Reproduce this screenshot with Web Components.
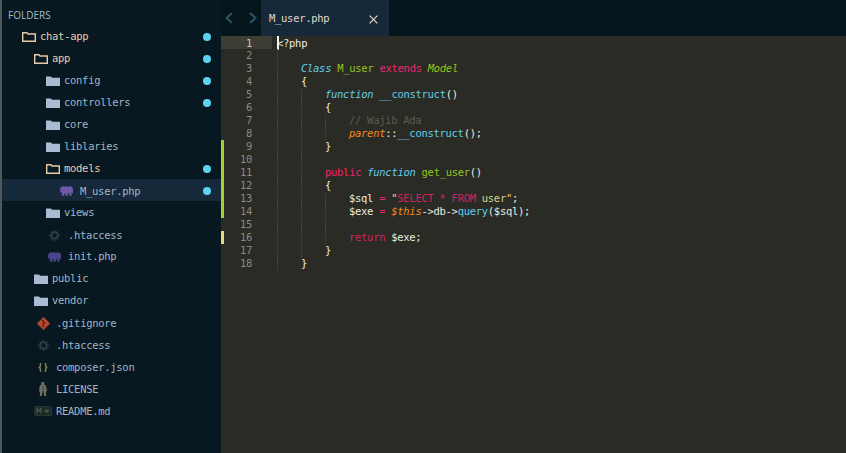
<!DOCTYPE html>
<html><head><meta charset="utf-8"><style>
html,body{margin:0;padding:0;background:#2b2b25;overflow:hidden}
body{width:846px;height:453px}
</style></head><body>
<app-window>
  <side-bar slot="side"></side-bar>
  <tab-bar slot="tabs"></tab-bar>
  <code-view slot="code"></code-view>
</app-window>
<script>
const FONT='"DejaVu Sans Mono","Liberation Mono",monospace';
const TXT=`font:10.5px ${FONT};letter-spacing:-.29px`;
const ICONS={
open:`<svg width="14" height="10" viewBox="0 0 14 10"><path d="M.7 9.300V.7h4.300l1 1.300h7.300v7.300z" fill="none" stroke="#e8c9a8" stroke-width="1.400"/></svg>`,
closed:`<svg width="14" height="10" viewBox="0 0 14 10"><path d="M0 10V.4h5l1.100 1.400H14V10z" fill="#a9bcd3"/></svg>`,
php:`<svg width="13" height="10" viewBox="0 0 13 10"><path d="M3.200.2C1.300.2.300 1.500.1 3.300L0 6.200c0 .6.800.7 1 .1l.5-1.300.4 4.700h2.300l.2-2.400h.9l.2 2.400h2.200l.3-2.400h1.100l.3 2.400h2.200L11.600 6l.5 1c.3.500.9.300.9-.3V3.400C13 1.500 11.900.2 10 .2 9 .2 8.400.7 8 1.300 7.500.6 6.900.2 6 .2 5.300.2 4.800.5 4.500.8 4.200.4 3.800.2 3.200.2z" fill="COL"/></svg>`,
gear:`<svg width="11" height="11" viewBox="0 0 11 11"><circle cx="5.500" cy="5.500" r="3.200" fill="none" stroke="#2a3d48" stroke-width="2.100"/><path d="M5.500 0v2M5.500 9v2M0 5.500h2M9 5.500h2M1.600 1.600 3 3M8 8l1.400 1.400M9.400 1.600 8 3M3 8 1.600 9.400" stroke="#2a3d48" stroke-width="1.400"/></svg>`,
git:`<svg width="13" height="13" viewBox="0 0 13 13"><path d="M6.500 0 13 6.500 6.500 13 0 6.500z" fill="#b8482e"/><path d="M5 3l3.300 3.300M6.300 5v4" stroke="#4a1f16" stroke-width="1.100"/><circle cx="6.300" cy="9.300" r=".9" fill="#4a1f16"/></svg>`,
json:`<svg width="10" height="9" viewBox="0 0 10 9"><path d="M3.300.6C1.900.6 2.300 1.800 2.300 3 2.300 4 1.700 4.500.7 4.500c1 0 1.600.5 1.600 1.500 0 1.200-.4 2.400 1 2.400M6.700.6c1.400 0 1 1.200 1 2.400 0 1 .6 1.500 1.600 1.500-1 0-1.600.5-1.600 1.500 0 1.200.4 2.400-1 2.400" fill="none" stroke="#8f8c58" stroke-width="1.300"/></svg>`,
lic:`<svg width="8" height="14" viewBox="0 0 8 14"><path d="M2.500 0h2.600l.4 2.800 1.500.8L8 9l-.9.700V14H5.100l-.7-5h-.8l-.7 5H.9V9.700L0 9l.9-5.400 1.300-.8z" fill="#6d6f60"/><path d="M4 4v4" stroke="#2a302c" stroke-width=".8"/></svg>`,
md:`<svg width="18" height="10" viewBox="0 0 18 10"><rect x=".5" y=".5" width="17" height="9" rx="1" fill="#1b2a2b" stroke="#2a3634"/><path d="M3 7.500v-5l2 2.400 2-2.400v5M10.500 5h4.500M12.700 3v4" fill="none" stroke="#505545" stroke-width="1.300"/></svg>`
};
function def(name,css,html,init){customElements.define(name,class extends HTMLElement{constructor(){super();const r=this.attachShadow({mode:'open'});r.innerHTML=`<style>${css}</style>${html}`;}connectedCallback(){init&&init.call(this,this.shadowRoot)}})}

def('app-window',`:host{display:grid;grid-template-columns:221px 1fr;grid-template-rows:36px 1fr;width:846px;height:453px;background:#2b2b25}
.s{grid-row:1/3;display:block}`,`<div class="s"><slot name="side"></slot></div><slot name="tabs"></slot><slot name="code"></slot>`);

def('tree-row',`:host{display:flex;align-items:center;height:22px;${TXT};color:#9fb6c6}
:host([selected]){background:#16293a}
:host([open]){color:#e8cdb0}
.i{display:flex;justify-content:center;align-items:center;flex:none;margin-top:2px}
.t{white-space:pre}
:host([low]) .t{padding-top:2px}
.d{margin-left:auto;margin-right:10px;margin-top:2px;width:8px;height:8px;border-radius:50%;background:#5cd3ee;flex:none}`,
`<span class="i"></span><span class="t"><slot></slot></span><span class="d"></span>`,
function(r){
  const pad=+this.getAttribute('pad'),w=+(this.getAttribute('iw')||14),gap=+(this.getAttribute('gap')||4);
  const i=r.querySelector('.i');i.style.marginLeft=pad+'px';i.style.width=w+'px';i.style.marginRight=gap+'px';
  i.innerHTML=(ICONS[this.getAttribute('icon')]||'').replace('COL',this.hasAttribute('selected')?'#6e58a8':'#4c4488');
  if(!this.hasAttribute('dot'))r.querySelector('.d').style.display='none';
});

def('side-bar',`:host{display:block;height:453px;background:#071820;border-left:2px solid #51585c;box-sizing:border-box;overflow:hidden}
.h{height:25px;box-sizing:border-box;padding:9px 0 0 6px;font:10px/12px "Open Sans",sans-serif;color:#a6bac6}`,
`<div class="h">FOLDERS</div>
<tree-row pad="20" icon="open" dot open>chat-app</tree-row>
<tree-row pad="32" icon="open" dot open>app</tree-row>
<tree-row pad="44" icon="closed" dot>config</tree-row>
<tree-row pad="44" icon="closed" dot>controllers</tree-row>
<tree-row pad="44" icon="closed">core</tree-row>
<tree-row pad="44" icon="closed">liblaries</tree-row>
<tree-row pad="44" icon="open" dot open>models</tree-row>
<tree-row pad="58" icon="php" iw="13" gap="7" selected dot low>M_user.php</tree-row>
<tree-row pad="44" icon="closed">views</tree-row>
<tree-row pad="46" icon="gear" iw="12" gap="8" low>.htaccess</tree-row>
<tree-row pad="46" icon="php" iw="13" gap="7">init.php</tree-row>
<tree-row pad="32" icon="closed">public</tree-row>
<tree-row pad="32" icon="closed">vendor</tree-row>
<tree-row pad="34" icon="git" iw="14" gap="6" low>.gitignore</tree-row>
<tree-row pad="34" icon="gear" iw="14" gap="6" low>.htaccess</tree-row>
<tree-row pad="34" icon="json" iw="14" gap="6" low>composer.json</tree-row>
<tree-row pad="34" icon="lic" iw="14" gap="6" low>LICENSE</tree-row>
<tree-row pad="32" icon="md" iw="18" gap="4" low>README.md</tree-row>`);

def('tab-bar',`:host{display:flex;height:36px;background:#05151c;${TXT}}
.nav{width:40px;display:flex;align-items:center;padding-left:4px;gap:16px;box-sizing:border-box}
.tab{width:128px;background:#16293a;color:#e0d8c8;display:flex;align-items:center;padding-left:8px;box-sizing:border-box}
.x{margin-left:auto;margin-right:11px;margin-top:3px;display:flex}`,
`<div class="nav"><svg width="8" height="12" viewBox="0 0 8 12"><path d="M7 1 1.500 6 7 11" fill="none" stroke="#2d5266" stroke-width="2.200"/></svg><svg width="8" height="12" viewBox="0 0 8 12"><path d="M1 1l5.500 5L1 11" fill="none" stroke="#2d5266" stroke-width="2.200"/></svg></div>
<div class="tab"><span>M_user.php</span><span class="x"><svg width="9" height="9" viewBox="0 0 9 9"><path d="M.6.6l7.800 7.800M8.400.6.600 8.400" stroke="#e4d8c4" stroke-width="1.200"/></svg></span></div>`);

const K=(c,t,i)=>`<span style="color:${c}${i?';font-style:italic':''}">${t}</span>`;
const W='#ececE0',B='#62cdea',G='#94c41f',P='#ec2670',O='#f08c1c',R='#d0245f';
const LINES=[
[0,'&lt;?php'],[1,''],
[1,`${K(B,'Class',1)} ${K(G,'M_user')} ${K(P,'extends')} ${K(G,'Model',1)}`],
[1,'{'],
[2,`${K(B,'function',1)} ${K(B,'__construct')}()`],
[2,'{'],
[3,K('#5d5c52','// Wajib Ada')],
[3,`${K(O,'parent',1)}::${K(B,'__construct')}();`],
[2,'}'],[2,''],
[2,`${K(P,'public')} ${K(B,'function',1)} ${K(G,'get_user')}()`],
[2,'{'],
[3,`$sql ${K(P,'=')} ${K('#e6dc8c','"')}${K(R,'SELECT * FROM')} ${K('#d8d088','user"')};`],
[3,`$exe ${K(P,'=')} ${K(O,'$this',1)}-&gt;db-&gt;${K(B,'query')}($sql);`],
[3,''],
[3,`${K(R,'return')} $exe;`],
[2,'}'],
[1,'}']];
const MARK={9:'g',10:'g',11:'g',12:'g',13:'g',14:'g',16:'y'};
def('code-line',`:host{display:flex;height:13px;${TXT};line-height:13px;color:${W};white-space:pre}
.gut{width:51px;flex:none;box-sizing:border-box;display:flex;color:#8a8a7e}
:host([active]) .gut{background:#3e3e34;color:#c8c8ba}
.m{width:3px;flex:none}
.n{width:28px;text-align:right}
.b{flex:1;display:flex;padding-left:5px}
.g{width:24px;flex:none;box-sizing:border-box;border-left:1px dotted #4f4f46}
.c{width:2px;background:#f4f4ee;height:14px;flex:none;margin-right:-2px}
:host([active]) .n,:host([active]) .s{padding-top:1px}`,
`<div class="gut"><span class="m"></span><span class="n"></span></div><div class="b"></div>`,
function(r){
 const n=+this.getAttribute('n'),ind=+this.getAttribute('ind');
 r.querySelector('.n').textContent=n;
 const m=MARK[n];if(m)r.querySelector('.m').style.background=m=='g'?'#a6d32b':'#e6d77a';
 const b=r.querySelector('.b');
 let h='';if(n==1)h+='<span class="c"></span>';
 for(let i=0;i<ind;i++)h+='<span class="g"></span>';
 b.innerHTML=h+`<span class="s">${this.html||''}</span>`;
});
def('code-view',`:host{display:block;background:#2b2b25;overflow:hidden;height:417px}`,`<div id="l"></div>`,
function(r){
 const l=r.getElementById('l');
 LINES.forEach((x,i)=>{const e=document.createElement('code-line');e.setAttribute('n',i+1);e.setAttribute('ind',x[0]);e.html=x[1];if(i==0)e.setAttribute('active','');l.appendChild(e)});
});
</script>
</body></html>
